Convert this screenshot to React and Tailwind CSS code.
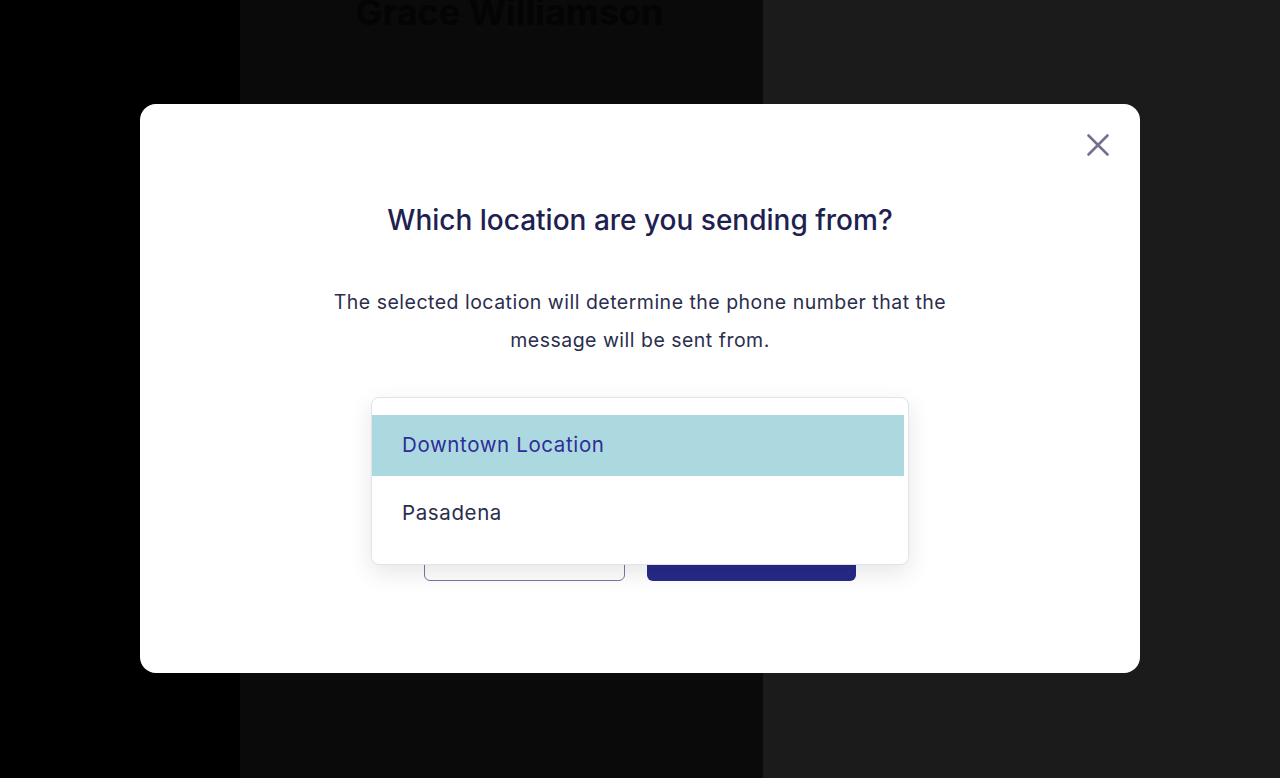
import { useState } from "react";

const locations = [
  { id: 0, name: "Downtown Location" },
  { id: 1, name: "Pasadena" }
];

const CloseIcon = () => (
  <svg viewBox="0 0 24 24" className="size-[24px]" fill="none" stroke="#72728f" strokeWidth="2.6" strokeLinecap="round">
    <path d="M2.5 2.5 L21.5 21.5 M21.5 2.5 L2.5 21.5" />
  </svg>
);

const App = () => {
  const [active, setActive] = useState(0);

  return (
    <div className="relative h-[778px] w-full overflow-hidden font-['Inter',sans-serif]">
      {/* page behind the modal */}
      <div className="flex h-full">
        <div className="w-[240px] bg-black" />
        <div className="w-[523px] bg-[#0a0a0a]">
          <h1 className="-mt-[15px] pl-[16px] text-center text-[36px] font-bold text-[#040404]">
            Grace Williamson
          </h1>
        </div>
        <div className="flex-1 bg-[#1b1b1b]" />
      </div>

      {/* modal */}
      <div className="absolute inset-0 flex items-start justify-center pt-[104px]">
        <div className="relative flex h-[569px] w-[1000px] flex-col items-center rounded-[16px] bg-white pt-[98px]">
          <button className="absolute right-[30px] top-[29px]">
            <CloseIcon />
          </button>

          <h2 className="text-[28px] font-medium leading-[36px] text-[#1e2150]">
            Which location are you sending from?
          </h2>
          <p className="mt-[45px] w-[660px] text-center text-[19.5px] leading-[38px] tracking-[0.025em] text-[#2b2d4d]">
            The selected location will determine the phone number that the message will be sent from.
          </p>

          <div className="relative mt-[38px] h-[56px] w-[538px]">
            <div className="absolute left-0 top-0 z-10 w-[538px] rounded-[8px] border border-[#e2e2ee] bg-white pb-[20px] pt-[17px] shadow-[0_8px_24px_rgba(0,0,0,0.10)]">
              {locations.map((loc, index) => (
                <div
                  key={loc.id}
                  onClick={() => setActive(index)}
                  className={`mr-[4px] flex h-[61px] items-center pl-[30px] text-[20.5px] tracking-[0.03em] ${index > 0 ? "mt-[7px]" : ""} ${
                    active === index ? "bg-[#acd9df] text-[#2f2d99]" : "text-[#2b2d4d]"
                  }`}
                >
                  {loc.name}
                </div>
              ))}
            </div>
          </div>

          <div className="mt-[80px] flex gap-[22px]">
            <button className="h-[48px] w-[201px] rounded-[6px] border-[1.5px] border-[#7479a8] text-[16px] text-[#272a88]">
              Cancel
            </button>
            <button className="h-[48px] w-[209px] rounded-[6px] bg-[#272a88] text-[16px] text-white">
              Continue
            </button>
          </div>
        </div>
      </div>
    </div>
  );
};

export default App;
